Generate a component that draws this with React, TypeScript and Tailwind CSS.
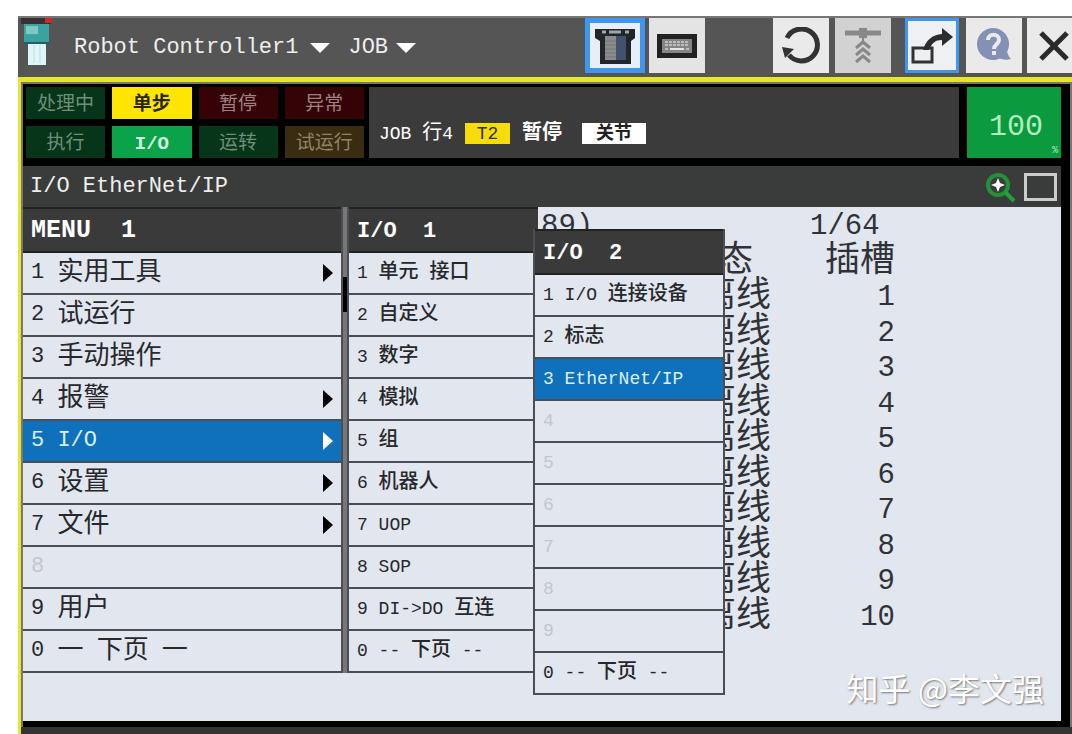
import { useState, type ReactNode } from "react";

type Item = { no: number; label?: string; sub?: boolean };

const MENU_1: Item[] = [
  { no: 1, label: "实用工具", sub: true },
  { no: 2, label: "试运行" },
  { no: 3, label: "手动操作" },
  { no: 4, label: "报警", sub: true },
  { no: 5, label: "I/O", sub: true },
  { no: 6, label: "设置", sub: true },
  { no: 7, label: "文件", sub: true },
  { no: 8 },
  { no: 9, label: "用户" },
  { no: 0, label: "一 下页 一" },
];

const IO_1: Item[] = [
  { no: 1, label: "单元 接口" },
  { no: 2, label: "自定义" },
  { no: 3, label: "数字" },
  { no: 4, label: "模拟" },
  { no: 5, label: "组" },
  { no: 6, label: "机器人" },
  { no: 7, label: "UOP" },
  { no: 8, label: "SOP" },
  { no: 9, label: "DI->DO 互连" },
  { no: 0, label: "-- 下页 --" },
];

const IO_2: Item[] = [
  { no: 1, label: "I/O 连接设备" },
  { no: 2, label: "标志" },
  { no: 3, label: "EtherNet/IP" },
  { no: 4 },
  { no: 5 },
  { no: 6 },
  { no: 7 },
  { no: 8 },
  { no: 9 },
  { no: 0, label: "-- 下页 --" },
];

const LAMPS = [
  { label: "处理中", tone: "bg-[#06351a] text-[#6f8f79]" },
  { label: "单步", tone: "bg-[#ffe600] text-[#2a2600] font-bold" },
  { label: "暂停", tone: "bg-[#350205] text-[#9c8083]" },
  { label: "异常", tone: "bg-[#350205] text-[#9c8083]" },
  { label: "执行", tone: "bg-[#06351a] text-[#6f8f79]" },
  { label: "I/O", tone: "bg-[#0ba34a] text-[#d8ffe0] font-bold" },
  { label: "运转", tone: "bg-[#06351a] text-[#6f8f79]" },
  { label: "试运行", tone: "bg-[#3a2c10] text-[#8f8468]" },
];

const SLOTS = [1, 2, 3, 4, 5, 6, 7, 8, 9, 10];

/** CJK glyphs run a little larger than the half-width latin ones. */
function Mixed({ text, cjk }: { text: string; cjk: string }) {
  return (
    <>
      {text
        .split(/([\u4e00-\u9fff]+)/)
        .filter(Boolean)
        .map((run, i) => (
          <span key={i} className={/[\u4e00-\u9fff]/.test(run) ? cjk : undefined}>
            {run}
          </span>
        ))}
    </>
  );
}

function Menu({
  title,
  items,
  active,
  onPick,
  large,
  className,
}: {
  title: string;
  items: Item[];
  active?: number;
  onPick: (no: number) => void;
  large?: boolean;
  className: string;
}) {
  return (
    <div className={`border-[#4b4e54] bg-[#e2e6ee] ${className}`}>
      <h2
        className={`flex h-[46px] items-center border-y-2 border-[#222] bg-[#3a3a3a] px-2 pt-[2px] font-bold whitespace-pre text-white ${
          large ? "text-[25px]" : "text-[22px]"
        }`}
      >
        {title}
      </h2>
      <ul>
        {items.map((item) => {
          const on = item.no === active;
          return (
            <li key={item.no}>
              <button
                type="button"
                disabled={!item.label}
                onClick={() => onPick(item.no)}
                className={`flex h-[42px] w-full items-center border-b-2 border-[#4b4e54] px-2 text-left leading-none whitespace-pre ${
                  large ? "text-[22px]" : "text-[18px]"
                } ${
                  on
                    ? "bg-[#0f70bc] text-[#dceeff]"
                    : item.label
                      ? "text-[#26282c]"
                      : "text-[#c3c7cd]"
                }`}
              >
                <span className="flex flex-1 items-center">
                  <Mixed
                    text={`${item.no} ${item.label ?? ""}`}
                    cjk={large ? "text-[26px]" : "text-[20px] font-medium"}
                  />
                </span>
                {item.sub && (
                  <svg
                    viewBox="0 0 10 18"
                    className={`h-[18px] w-[10px] ${on ? "fill-white" : "fill-black"}`}
                    aria-hidden
                  >
                    <path d="M0 0 10 9 0 18z" />
                  </svg>
                )}
              </button>
            </li>
          );
        })}
      </ul>
    </div>
  );
}

function ToolButton({
  label,
  className,
  children,
}: {
  label: string;
  className: string;
  children: ReactNode;
}) {
  return (
    <button
      type="button"
      aria-label={label}
      className={`flex h-[55px] shrink-0 items-center justify-center ${className}`}
    >
      {children}
    </button>
  );
}

function Caret() {
  return (
    <svg viewBox="0 0 20 10" className="h-[10px] w-5 fill-white" aria-hidden>
      <path d="M0 0h20L10 10z" />
    </svg>
  );
}

function TopBar() {
  return (
    <header className="flex h-[61px] overflow-hidden border-t-2 border-[#777] bg-[#555]">
      <svg viewBox="0 0 36 52" className="h-[52px] w-9 shrink-0" aria-hidden>
        <path d="M3 0h30v6H3z" fill="#3a3033" />
        <path d="M27 0h7v5h-7z" fill="#d02a20" />
        <path d="M6 6h25v18H6z" fill="#3aa3a0" />
        <path d="M8 8h12v8H8z" fill="#7cc9c4" />
        <path d="M10 25h18v22H10z" fill="#dff6f8" />
        <path d="M16 27v18M22 27v18" stroke="#b8dfe4" strokeWidth="1" />
        <path d="M6 24h25v2H6z" fill="#20605f" />
      </svg>
      <div className="ml-[20px] flex items-center gap-[18px] text-[22px] text-[#eee]">
        <button type="button" className="flex items-center gap-3">
          Robot Controller1 <Caret />
        </button>
        <button type="button" className="flex items-center gap-2">
          JOB <Caret />
        </button>
      </div>

      <div className="ml-auto flex shrink-0">
        <ToolButton
          label="Pendant"
          className="w-[60px] border-[5px] border-[#3d96f0] bg-[#e9eef6]"
        >
          <svg viewBox="0 0 42 38" className="h-[38px] w-[42px]" aria-hidden>
            <path d="M1 2h40v9l-4 3v23H6V14L1 11z" fill="#22252b" />
            <path d="M11 9h11v24H11z" fill="#8b8b8b" />
            <path d="M22 9h10v24H22z" fill="#41516e" />
            <path
              d="M11 14h11M11 18h11M11 22h11M11 26h11M11 30h11"
              stroke="#777"
            />
            <path d="M8 5h4M15 5h12M31 5h4" stroke="#9aa" strokeWidth="3" />
          </svg>
        </ToolButton>
        <ToolButton label="Keyboard" className="ml-[4px] w-[56px] bg-[#e4e4e4]">
          <svg viewBox="0 0 42 26" className="h-[26px] w-[42px]" aria-hidden>
            <path d="M1 1h40v24H1z" fill="#222" />
            <path d="M6 6h30v14H6z" fill="#858585" />
            <path
              d="M9 9h24M9 12h24M9 16h3M30 16h3"
              stroke="#bbb"
              strokeWidth="2"
              strokeDasharray="3 1"
            />
            <path d="M14 16h14" stroke="#e4e4e4" strokeWidth="2" />
          </svg>
        </ToolButton>
        <ToolButton label="Reset" className="ml-[68px] w-[56px] bg-[#eaeaea]">
          <svg viewBox="0 0 40 38" className="h-[38px] w-10" fill="none" aria-hidden>
            <path
              d="M6 11A16 16 0 1 1 8 28"
              stroke="#333"
              strokeWidth="5"
            />
            <path d="M1 20l12 2-9 9z" fill="#333" />
          </svg>
        </ToolButton>
        <ToolButton label="Jog" className="ml-[6px] w-[56px] bg-[#d2d2d2]">
          <svg
            viewBox="0 0 38 38"
            className="h-[38px] w-[38px]"
            fill="none"
            stroke="#888"
            aria-hidden
          >
            <path d="M1 6h36" strokeWidth="5" />
            <path d="M15 6h8" strokeWidth="10" />
            <path d="M19 8v8" strokeWidth="2" />
            <path
              d="m12 21 7-6 7 6M12 28l7-6 7 6M12 35l7-6 7 6"
              strokeWidth="3"
            />
          </svg>
        </ToolButton>
        <ToolButton
          label="External"
          className="ml-[14px] w-[54px] border-[3px] border-[#3d96f0] bg-[#eef0f4]"
        >
          <svg viewBox="0 0 44 38" className="h-[38px] w-11" aria-hidden>
            <path
              d="M3 21h19v14H3z"
              fill="none"
              stroke="#333"
              strokeWidth="3"
            />
            <path
              d="M13 23C16 13 22 8 32 7V1l11 9-11 9v-6c-7 0-10 3-13 10z"
              fill="#2c2c2c"
            />
          </svg>
        </ToolButton>
        <ToolButton label="Help" className="ml-[7px] w-[56px] bg-[#eaeaea]">
          <svg viewBox="0 0 38 38" className="h-[38px] w-[38px]" aria-hidden>
            <circle cx="18" cy="17" r="16" fill="#8490b4" />
            <path
              d="M24 31c4-1 6-4 8-7 1 4 2 6 4 8-4 1-8 1-12-1z"
              fill="#8490b4"
            />
            <path
              d="M13 13c0-7 11-7 11 0 0 4-5 4-5 9M19 24v4"
              fill="none"
              stroke="#eaeaea"
              strokeWidth="4"
            />
          </svg>
        </ToolButton>
        <ToolButton label="Close" className="ml-[5px] w-[45px] bg-[#eaeaea] pl-[8px]">
          <svg viewBox="0 0 32 32" className="h-8 w-8" aria-hidden>
            <path d="M3 3l26 26M29 3 3 29" stroke="#2b2b2b" strokeWidth="5" />
          </svg>
        </ToolButton>
      </div>
    </header>
  );
}

function StatusPanel() {
  return (
    <section className="flex h-[80px] bg-black pt-[3px] pb-[6px] pl-[3px]">
      <div className="grid w-[338px] shrink-0 grid-cols-4 grid-rows-2 gap-[7px]">
        {LAMPS.map((lamp) => (
          <div
            key={lamp.label}
            className={`flex items-center justify-center pt-1 text-[19px] leading-none ${lamp.tone}`}
          >
            {lamp.label}
          </div>
        ))}
      </div>
      <div className="ml-[5px] flex flex-1 items-end bg-[#3b3b3b] px-[10px] pb-[14px] text-[18px] leading-none text-white">
        <p className="flex h-[21px] items-center whitespace-pre">
          <Mixed text="JOB 行4" cjk="text-[20px]" />
        </p>
        <p className="ml-[12px] flex h-[21px] w-[45px] items-center justify-center bg-[#f5dc0a] text-[#332e00]">
          T2
        </p>
        <p className="ml-[12px] flex h-[21px] items-center text-[20px] font-bold">
          暂停
        </p>
        <p className="ml-[20px] flex h-[21px] w-[64px] items-center justify-center bg-white font-bold text-[#222]">
          关节
        </p>
      </div>
      <div className="relative ml-[8px] flex w-[94px] items-center justify-center bg-[#0b9b3e] pt-2 pl-1 text-[30px] leading-none text-[#b5ecc0]">
        100
        <span className="absolute right-[3px] bottom-[2px] text-[10px] leading-none">
          %
        </span>
      </div>
    </section>
  );
}

export default function App() {
  const [main, setMain] = useState(5);
  const [first, setFirst] = useState<number>();
  const [second, setSecond] = useState(3);

  return (
    <main className="h-screen overflow-hidden bg-white pt-4 pl-[18px] font-['Liberation_Mono','Noto_Sans_CJK_SC',monospace]">
      <TopBar />
      <div className="border-t-[5px] border-l-[3px] border-[#e6e62a]">
        <div className="border-t-2 border-r-2 border-l-2 border-[#777] bg-black pr-[9px]">
          <StatusPanel />
          <div className="flex h-[43px] items-center border-t-2 border-black bg-[#3a3c3b] pr-[4px] pl-[7px] text-[22px] text-[#eee]">
            <h1 className="flex-1">I/O EtherNet/IP</h1>
            <button type="button" aria-label="Zoom in">
              <svg viewBox="0 0 32 32" className="h-8 w-8" fill="none" aria-hidden>
                <circle cx="14" cy="14" r="10" stroke="#22913a" strokeWidth="4" />
                <path d="m21 21 9 9" stroke="#22a038" strokeWidth="4" />
                <path d="M14 7l2 5 5 2-5 2-2 5-2-5-5-2 5-2z" fill="#fff" />
              </svg>
            </button>
            <button
              type="button"
              aria-label="Window"
              className="ml-[8px] h-[28px] w-[33px] border-[3px] border-[#ccc]"
            />
          </div>

          <div className="relative h-[514px] bg-[#e2e6ee] pt-[2px] pl-[518px]">
            <table className="h-[426px] w-[354px] table-fixed text-[29px] leading-none text-[#303237]">
              <colgroup>
                <col className="w-[142px]" />
                <col className="w-[127px]" />
                <col className="w-[85px]" />
              </colgroup>
              <tbody>
                <tr className="h-[35px]">
                  <td className="p-0">89)</td>
                  <td className="p-0" />
                  <td className="p-0">1/64</td>
                </tr>
                <tr className="h-[35px] text-[35px]">
                  <td className="p-0" />
                  <th scope="col" className="p-0 text-left font-normal">
                    状态
                  </th>
                  <th scope="col" className="p-0 text-right font-normal">
                    插槽
                  </th>
                </tr>
                {SLOTS.map((slot) => (
                  <tr key={slot} className="h-[35px]">
                    <td className="p-0" />
                    <td className="p-0 pl-[18px] text-[35px]">离线</td>
                    <td className="p-0 text-right">{slot}</td>
                  </tr>
                ))}
              </tbody>
            </table>

            <nav className="absolute top-0 left-0 flex" aria-label="MENU">
              <Menu
                title="MENU  1"
                items={MENU_1}
                active={main}
                onPick={setMain}
                large
                className="w-[320px] border-r-2"
              />
              <div className="w-[4px] bg-[#777] pt-[70px]">
                <div className="h-[35px] bg-black" />
              </div>
              <Menu
                title="I/O  1"
                items={IO_1}
                active={first}
                onPick={setFirst}
                className="w-[191px] border-l-2"
              />
            </nav>
            <nav className="absolute top-[22px] left-[510px]" aria-label="I/O 2">
              <Menu
                title="I/O  2"
                items={IO_2}
                active={second}
                onPick={setSecond}
                className="w-[192px] border-x-2"
              />
            </nav>

            <p className="absolute right-[17px] bottom-[18px] font-['Noto_Sans_CJK_SC',sans-serif] text-[32px] leading-none text-white [text-shadow:1px_1px_2px_#777]">
              知乎 @李文强
            </p>
          </div>
          <div className="h-[6px]" />
        </div>
        <div className="h-8 bg-[#333]" />
      </div>
    </main>
  );
}
